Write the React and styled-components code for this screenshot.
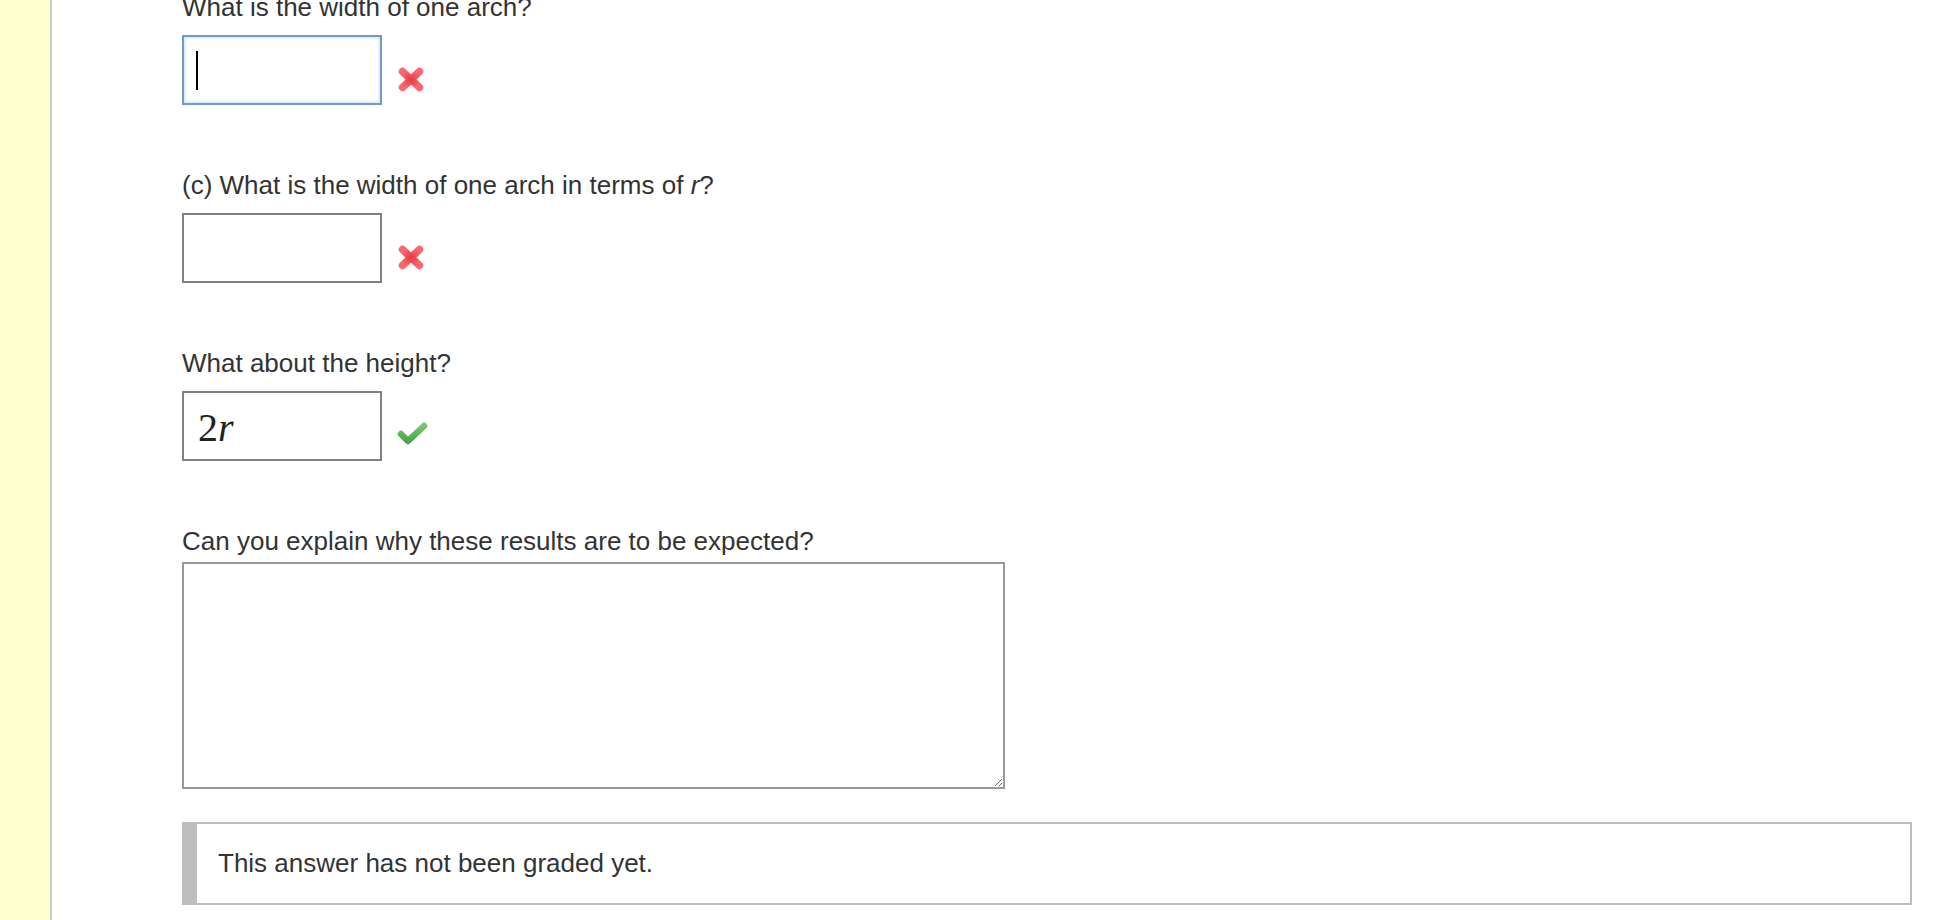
import React from "react";
import styled, { createGlobalStyle, css } from "styled-components";

const Global = createGlobalStyle`
  html, body { margin: 0; padding: 0; background: #fff; overflow: hidden; }
  body { font-family: "Liberation Sans", Arial, Helvetica, sans-serif; color: #333; }
`;

const Page = styled.div`
  display: flex;
  min-height: 100vh;
`;

const Sidebar = styled.div`
  width: 50px;
  flex: 0 0 50px;
  background: #ffffd0;
  border-right: 2px solid #cbcbcb;
`;

const Content = styled.div`
  flex: 1;
  padding: 0 32px 0 130px;
  margin-top: -8px;
  display: flex;
  flex-direction: column;
`;

const Question = styled.div`
  display: flex;
  flex-direction: column;
  margin-bottom: ${(p) => p.$after ?? 65}px;
`;

const Label = styled.div`
  font-size: 26px;
  line-height: 30px;
  color: #333;
  margin-bottom: ${(p) => p.$gap ?? 13}px;
  em { font-style: italic; }
`;

const AnswerRow = styled.div`
  display: flex;
  align-items: flex-end;
  gap: 15px;
`;

const AnswerBox = styled.div`
  box-sizing: border-box;
  width: 200px;
  height: 70px;
  border: 2px solid #808080;
  background: #fff;
  display: flex;
  align-items: center;
  padding-left: 12px;
  ${(p) =>
    p.$focused &&
    css`
      border-color: #6d9bd1;
      box-shadow: inset 0 0 3px 1px #cfe1f6;
    `}
`;

const Caret = styled.span`
  display: block;
  width: 2px;
  height: 39px;
  background: #000;
`;

const MathValue = styled.span`
  font-family: "Liberation Serif", "Times New Roman", serif;
  font-size: 40px;
  color: #222;
  padding-left: 2px;
  margin-top: 2px;
  i { font-style: italic; }
`;

const Mark = styled.span`
  display: flex;
  margin-bottom: ${(p) => p.$mb ?? 13}px;
`;

const Explain = styled.textarea`
  box-sizing: border-box;
  width: 823px;
  height: 227px;
  border: 2px solid #999;
  border-radius: 0;
  resize: both;
  outline: none;
  font-family: inherit;
  font-size: 18px;
  margin: 0;
  display: block;
`;

const GradeBox = styled.div`
  margin-top: 33px;
  box-sizing: border-box;
  height: 83px;
  border: 2px solid #bdbdbd;
  border-left: 15px solid #bdbdbd;
  display: flex;
  align-items: center;
  padding-left: 21px;
  font-size: 26px;
  color: #333;
`;

const CrossIcon = () => (
  <svg width="28" height="27" viewBox="0 0 28 27">
    <defs>
      <radialGradient id="xg" cx="50%" cy="50%" r="60%">
        <stop offset="0%" stopColor="#e23a42" />
        <stop offset="100%" stopColor="#f8686e" />
      </radialGradient>
    </defs>
    <g stroke="url(#xg)" strokeWidth="7.5" strokeLinecap="round">
      <line x1="5.5" y1="5.5" x2="22.5" y2="21.5" />
      <line x1="22.5" y1="5.5" x2="5.5" y2="21.5" />
    </g>
  </svg>
);

const CheckIcon = () => (
  <svg width="31" height="25" viewBox="0 0 31 25">
    <defs>
      <linearGradient id="cg" x1="0" y1="0" x2="0" y2="1">
        <stop offset="0%" stopColor="#72c672" />
        <stop offset="100%" stopColor="#48a84a" />
      </linearGradient>
    </defs>
    <polyline
      points="4,13 11,20 27,5"
      fill="none"
      stroke="url(#cg)"
      strokeWidth="6.5"
      strokeLinecap="round"
      strokeLinejoin="round"
    />
  </svg>
);

export default function App() {
  return (
    <>
      <Global />
      <Page>
        <Sidebar />
        <Content>
          <Question>
            <Label>What is the width of one arch?</Label>
            <AnswerRow>
              <AnswerBox $focused>
                <Caret />
              </AnswerBox>
              <Mark $mb={12}>
                <CrossIcon />
              </Mark>
            </AnswerRow>
          </Question>

          <Question>
            <Label>
              (c) What is the width of one arch in terms of <em>r</em>?
            </Label>
            <AnswerRow>
              <AnswerBox />
              <Mark $mb={12}>
                <CrossIcon />
              </Mark>
            </AnswerRow>
          </Question>

          <Question>
            <Label>What about the height?</Label>
            <AnswerRow>
              <AnswerBox>
                <MathValue>
                  2<i>r</i>
                </MathValue>
              </AnswerBox>
              <Mark $mb={15}>
                <CheckIcon />
              </Mark>
            </AnswerRow>
          </Question>

          <Question $after={0}>
            <Label $gap={6}>Can you explain why these results are to be expected?</Label>
            <Explain />
          </Question>

          <GradeBox>This answer has not been graded yet.</GradeBox>
        </Content>
      </Page>
    </>
  );
}
